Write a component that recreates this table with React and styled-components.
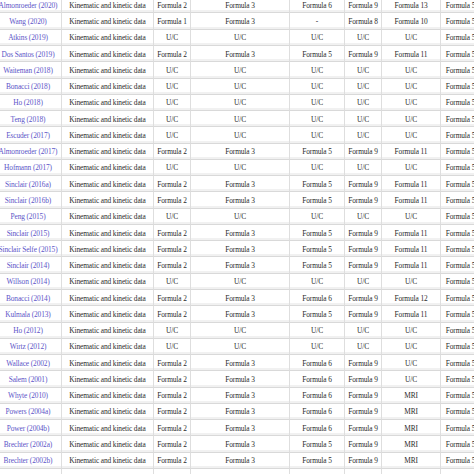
import React from "react";
import styled, { createGlobalStyle } from "styled-components";

const Global = createGlobalStyle`
  html, body { margin: 0; padding: 0; background: #fff; overflow: hidden; }
  body { width: 474px; height: 474px; }
`;

const Viewport = styled.div`
  width: 474px;
  height: 474px;
  overflow: hidden;
  background: #fff;
`;

const Grid = styled.div`
  display: grid;
  grid-template-columns: 67px 92px 37px 99px 55px 37px 59px 40px 40px;
  grid-auto-rows: 16.27px;
  margin-top: -2.8px;
  margin-left: -5px;
  width: 526px;
  font-family: "Liberation Serif", "Times New Roman", serif;
  font-size: 7.4px;
  letter-spacing: -0.12px;
  color: #2b2b2b;
`;

const Cell = styled.div`
  box-sizing: border-box;
  display: flex;
  align-items: center;
  justify-content: center;
  white-space: nowrap;
  border-right: 1px solid #dedede;
  border-bottom: 1px solid #d9d9d9;
  box-shadow: inset 0 -2px 0 #f1f1f1;
  padding-top: 1px;
  color: ${(p) => (p.$link ? "#5d55c8" : "#2b2b2b")};
`;

const F = (n) => `Formula ${n}`;
const UC = "U/C";
const A = [F(2), F(3), F(5), F(9), F(11)];
const U = [UC, UC, UC, UC, UC];
const B6U = [F(2), F(3), F(6), F(9), UC];
const B6M = [F(2), F(3), F(6), F(9), "MRI"];
const B5M = [F(2), F(3), F(5), F(9), "MRI"];

const rows = [
  ["Almonroeder (2020)", [F(2), F(3), F(6), F(9), F(13)]],
  ["Wang (2020)", [F(1), F(3), "-", F(8), F(10)]],
  ["Atkins (2019)", U],
  ["Dos Santos (2019)", A],
  ["Waiteman (2018)", U],
  ["Bonacci (2018)", U],
  ["Ho (2018)", U],
  ["Teng (2018)", U],
  ["Escuder (2017)", U],
  ["Almonroeder (2017)", A],
  ["Hofmann (2017)", U],
  ["Sinclair (2016a)", A],
  ["Sinclair (2016b)", A],
  ["Peng (2015)", U],
  ["Sinclair (2015)", A],
  ["Sinclair Selfe (2015)", A],
  ["Sinclair (2014)", A],
  ["Willson (2014)", U],
  ["Bonacci (2014)", [F(2), F(3), F(6), F(9), F(12)]],
  ["Kulmala (2013)", A],
  ["Ho (2012)", U],
  ["Wirtz (2012)", U],
  ["Wallace (2002)", B6U],
  ["Salem (2001)", B6U],
  ["Whyte (2010)", B6M],
  ["Powers (2004a)", B6M],
  ["Power (2004b)", B6M],
  ["Brechter (2002a)", B5M],
  ["Brechter (2002b)", B5M],
  ["Bowers (2001)", B5M],
];

export default function App() {
  return (
    <Viewport>
      <Global />
      <Grid>
        {rows.map(([name, vals], i) => (
          <React.Fragment key={i}>
            <Cell $link>{name}</Cell>
            <Cell>Kinematic and kinetic data</Cell>
            {vals.map((v, j) => (
              <Cell key={j}>{v}</Cell>
            ))}
            <Cell>{F(5)}</Cell>
            <Cell>{F(7)}</Cell>
          </React.Fragment>
        ))}
      </Grid>
    </Viewport>
  );
}
